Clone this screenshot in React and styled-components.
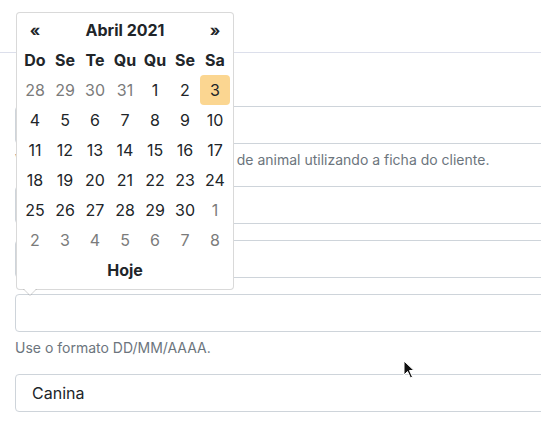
import React from 'react'
import styled, { createGlobalStyle } from 'styled-components'

const GlobalStyle = createGlobalStyle`
  html, body {
    margin: 0;
    background: #fff;
    overflow: hidden;
  }
  body {
    font-family: Inter, "Liberation Sans", sans-serif;
    color: #212529;
  }
`

const Page = styled.div`
  position: relative;
  width: 541px;
  height: 429px;
  overflow: hidden;
`

const TopBar = styled.div`
  height: 52px;
  border-bottom: 1px solid #dcdfeb;
`

const Form = styled.form`
  padding: 53px 0 0 15px;
  width: 640px;
`

const Group = styled.div`
  margin-bottom: 16px;
`

const Input = styled.div`
  box-sizing: border-box;
  height: 38px;
  border: 1px solid #ced4da;
  border-radius: 4px;
  padding: 0 16px;
  display: flex;
  align-items: center;
  font-size: 16px;
  color: #212529;
`

const Help = styled.div`
  margin-top: 5px;
  font-size: 14px;
  line-height: 21px;
  color: #6c757d;
`

const Picker = styled.div`
  position: absolute;
  left: 16px;
  top: 12px;
  box-sizing: border-box;
  padding: 2px 3px 4px 3px;
  background: #fff;
  border: 1px solid rgba(0, 0, 0, 0.15);
  border-radius: 4px;

  &::before,
  &::after {
    content: '';
    position: absolute;
    border-left: 7px solid transparent;
    border-right: 7px solid transparent;
  }
  &::before {
    left: 6px;
    bottom: -7px;
    border-top: 7px solid rgba(0, 0, 0, 0.18);
  }
  &::after {
    left: 7px;
    bottom: -6px;
    border-left-width: 6px;
    border-right-width: 6px;
    border-top: 6px solid #fff;
  }
`

const Grid = styled.div`
  display: grid;
  grid-template-columns: repeat(7, 30px);
  grid-auto-rows: 30px;
  font-size: 16px;
`

const Cell = styled.div`
  display: flex;
  align-items: center;
  justify-content: center;
  border-radius: 4px;
  grid-column: ${(p) => (p.$span ? `span ${p.$span}` : 'auto')};
  font-weight: ${(p) => (p.$bold ? 700 : 400)};
  color: ${(p) => (p.$muted ? '#7b7b7b' : '#212529')};
  background: ${(p) => (p.$today ? '#fbd691' : 'transparent')};
`

const Cursor = styled.svg`
  position: absolute;
  left: 403px;
  top: 360px;
`

const weekdays = ['Do', 'Se', 'Te', 'Qu', 'Qu', 'Se', 'Sa']

const days = [
  [28, 1], [29, 1], [30, 1], [31, 1], [1], [2], [3, 0, 1],
  [4], [5], [6], [7], [8], [9], [10],
  [11], [12], [13], [14], [15], [16], [17],
  [18], [19], [20], [21], [22], [23], [24],
  [25], [26], [27], [28], [29], [30], [1, 1],
  [2, 1], [3, 1], [4, 1], [5, 1], [6, 1], [7, 1], [8, 1],
]

const App = () => (
  <Page>
    <GlobalStyle />
    <TopBar />
    <Form>
      <Group>
        <Input />
        <Help>Você pode cadastrar novos tipos de animal utilizando a ficha do cliente.</Help>
      </Group>
      <Group>
        <Input />
      </Group>
      <Group>
        <Input />
      </Group>
      <Group>
        <Input />
        <Help>Use o formato DD/MM/AAAA.</Help>
      </Group>
      <Group>
        <Input>Canina</Input>
      </Group>
    </Form>

    <Picker>
      <Grid>
        <Cell $bold>«</Cell>
        <Cell $bold $span={5}>Abril 2021</Cell>
        <Cell $bold>»</Cell>
        {weekdays.map((d, i) => (
          <Cell key={'w' + i} $bold>{d}</Cell>
        ))}
        {days.map(([n, muted, today], i) => (
          <Cell key={i} $muted={muted} $today={today}>{n}</Cell>
        ))}
        <Cell $bold $span={7}>Hoje</Cell>
      </Grid>
    </Picker>

    <Cursor width="13" height="20" viewBox="0 0 13 20">
      <path d="M1 1 L1 15 L4.5 11.5 L7.5 18 L9.5 17 L6.5 10.5 L11 10.5 Z" fill="#111" stroke="#fff" strokeWidth="1" />
    </Cursor>
  </Page>
)

export default App
